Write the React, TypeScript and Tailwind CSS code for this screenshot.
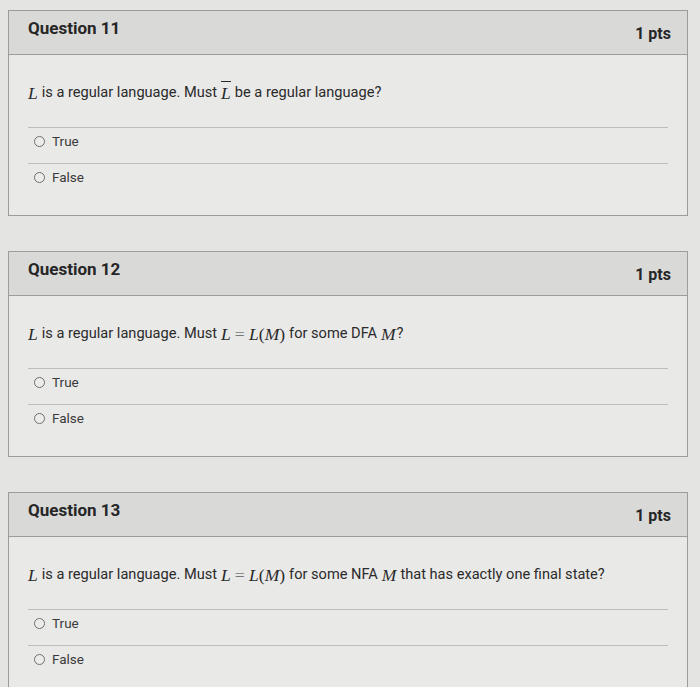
import React from 'react';

const sans = { fontFamily: 'Roboto, "Liberation Sans", sans-serif' };

function M({ children }: { children: React.ReactNode }) {
  return (
    <span className="italic text-[17.5px] text-[#2a2a2a]" style={{ fontFamily: '"Liberation Serif", serif' }}>
      {children}
    </span>
  );
}

function Radio({ label }: { label: string }) {
  return (
    <div className="flex items-center gap-[7px] pl-[6px] h-[26px] mb-[9px]">
      <span className="w-[11px] h-[11px] rounded-full border border-[#6f6f6f] bg-[#ececeb]" />
      <span className="text-[13.5px] text-[#3a3a3a]">{label}</span>
    </div>
  );
}

function QuestionCard({ num, children }: { num: number; children: React.ReactNode }) {
  return (
    <div className="mx-2 w-[680px] border border-[#9c9c9c] bg-[#e9e9e8]">
      <div className="flex justify-between h-[44px] bg-[#d9d9d8] border-b border-[#9c9c9c] pl-[19px] pr-[16px]">
        <span className="pt-[5px] text-[17px] font-bold text-[#262626]">Question {num}</span>
        <span className="pt-[11px] text-[16px] font-bold text-[#262626]">1 pts</span>
      </div>
      <div className="pl-[19px] pr-[19px] pt-[27px] pb-[16px]">
        <div className="text-[14.6px] text-[#2b2b2b] h-[22px] flex items-center gap-[4px]">{children}</div>
        <div className="mt-[23px] border-t border-[#bdbdbc]">
          <Radio label="True" />
        </div>
        <div className="border-t border-[#bdbdbc]">
          <Radio label="False" />
        </div>
      </div>
    </div>
  );
}

export default function App() {
  return (
    <div className="min-h-[687px] bg-[#e4e4e2] pt-[10px] flex flex-col gap-[35px]" style={sans}>
      <QuestionCard num={11}>
        <M>L</M>
        <span>is a regular language. Must</span>
        <M>
          <span className="border-t border-[#2a2a2a] pt-[1px]">L</span>
        </M>
        <span>be a regular language?</span>
      </QuestionCard>
      <QuestionCard num={12}>
        <M>L</M>
        <span>is a regular language. Must</span>
        <M>
          L <span className="not-italic text-[#777]">=</span> L<span className="not-italic">(</span>M<span className="not-italic">)</span>
        </M>
        <span>for some DFA</span>
        <M>M</M>
        <span className="-ml-[3px]">?</span>
      </QuestionCard>
      <QuestionCard num={13}>
        <M>L</M>
        <span>is a regular language. Must</span>
        <M>
          L <span className="not-italic text-[#777]">=</span> L<span className="not-italic">(</span>M<span className="not-italic">)</span>
        </M>
        <span>for some NFA</span>
        <M>M</M>
        <span>that has exactly one final state?</span>
      </QuestionCard>
    </div>
  );
}
